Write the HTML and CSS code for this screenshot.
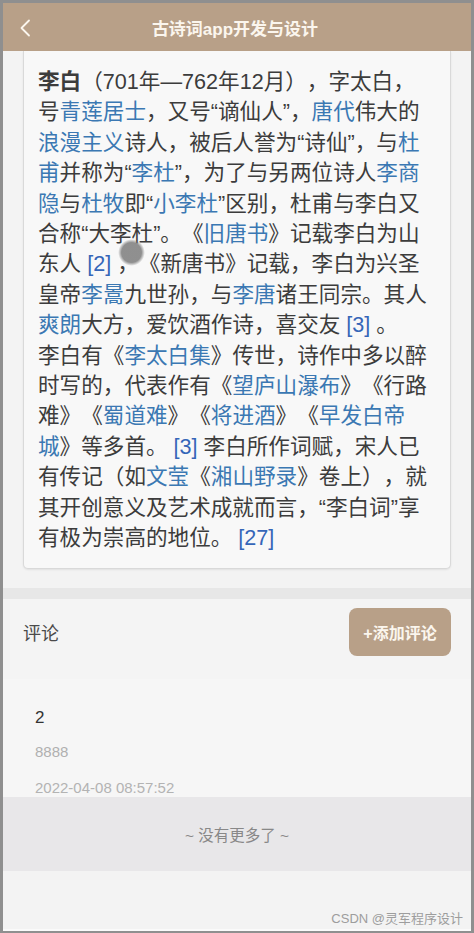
FILE: index.html
```html
<!DOCTYPE html>
<html lang="zh-CN">
<head>
    <meta charset="UTF-8">
    <meta name="viewport" content="width=device-width, initial-scale=1.0">
    <title>古诗词app开发与设计</title>
    <link rel="stylesheet" href="styles.css">
</head>
<body>
    <div class="screen">
        <!-- Top bar -->
        <header class="topbar">
            <a class="back-btn" href="#">
                <svg width="12" height="18" viewBox="0 0 12 18">
                    <polyline points="10,1.5 2.5,9 10,16.5" fill="none" stroke="#fbf6ee" stroke-width="1.8" stroke-linecap="round" stroke-linejoin="round"/>
                </svg>
            </a>
            <h1 class="topbar-title">古诗词app开发与设计</h1>
        </header>

        <!-- Poet summary -->
        <div class="intro-card">
            <p class="intro-text">
                <b>李白</b>（701年—762年12月），字太白，号<a href="#">青莲居士</a>，又号“谪仙人”，<a href="#">唐代</a>伟大的<a href="#">浪漫主义</a>诗人，被后人誉为“诗仙”，与<a href="#">杜甫</a>并称为“<a href="#">李杜</a>”，为了与另两位诗人<a href="#">李商隐</a>与<a href="#">杜牧</a>即“<a href="#">小李杜</a>”区别，杜甫与李白又合称“大李杜”。《<a href="#">旧唐书</a>》记载李白为山东人 <span class="cite">[2]</span> ，《新唐书》记载，李白为兴圣皇帝<a href="#">李暠</a>九世孙，与<a href="#">李唐</a>诸王同宗。其人<a href="#">爽朗</a>大方，爱饮酒作诗，喜交友 <span class="cite">[3]</span> 。<br>李白有《<a href="#">李太白集</a>》传世，诗作中多以醉时写的，代表作有《<a href="#">望庐山瀑布</a>》《行路难》《<a href="#">蜀道难</a>》《<a href="#">将进酒</a>》《<a href="#">早发白帝城</a>》等多首。 <span class="cite">[3]</span> 李白所作词赋，宋人已有传记（如<a href="#">文莹</a>《<a href="#">湘山野录</a>》卷上），就其开创意义及艺术成就而言，“李白词”享有极为崇高的地位。 <span class="cite">[27]</span>
            </p>
        </div>

        <!-- Comments -->
        <section class="comments">
            <div class="comments-head">
                <span class="comments-title">评论</span>
                <button class="add-comment">+添加评论</button>
            </div>
            <div class="comment-item">
                <div class="comment-user">2</div>
                <div class="comment-body">8888</div>
                <div class="comment-time">2022-04-08 08:57:52</div>
            </div>
        </section>

        <div class="no-more">~ 没有更多了 ~</div>
        <div class="page-bottom"></div>

        <div class="touch-dot"></div>
        <div class="watermark">CSDN @灵军程序设计</div>
    </div>
</body>
</html>
```

FILE: styles.css
```css
/* General */
body {
    margin: 0;
    background: #8f8f8f;
    font-family: 'Liberation Sans', 'Noto Sans CJK SC', sans-serif;
    color: #333;
    text-spacing-trim: space-all;
}

.screen {
    position: relative;
    width: 468px;
    margin: 3px 0 0 3px;
    background: #f3f3f3;
}

/* Top bar */
.topbar {
    position: relative;
    height: 48px;
    display: flex;
    align-items: center;
    justify-content: center;
    background-color: #b8a088;
}

.back-btn {
    position: absolute;
    left: 16px;
    top: 16px;
    display: flex;
}

.topbar-title {
    margin: 0 0 0 -4px;
    font-size: 17px;
    font-weight: 700;
    color: #fbf6ee;
}

/* Summary card */
.intro-card {
    margin: 0 20px 19px;
    padding: 16px 20px 14px 14px;
    background-color: #f8f8f8;
    border: 1px solid #d9d9d9;
    border-top: none;
    border-radius: 0 0 5px 5px;
    box-shadow: 0 1px 2px rgba(0, 0, 0, 0.08);
}

.intro-text {
    margin: 0;
    font-size: 21.6px;
    line-height: 30.4px;
    color: #3c3c3c;
}

.intro-text a {
    color: #3b78b3;
    text-decoration: none;
}

.intro-text .cite {
    color: #3566b8;
}

/* Comments */
.comments {
    border-top: 11px solid #e7e7e7;
}

.comments-head {
    display: flex;
    justify-content: space-between;
    align-items: center;
    padding: 9px 20px 23px;
    background-color: #f4f4f4;
}

.comments-title {
    font-size: 18px;
    color: #4a4a4a;
}

.add-comment {
    width: 102px;
    height: 48px;
    border: none;
    border-radius: 8px;
    background-color: #b8a088;
    color: #fbf6ee;
    font-family: inherit;
    font-size: 16px;
    font-weight: 700;
    cursor: pointer;
}

.comment-item {
    padding: 27px 32px 0;
    background-color: #f6f6f6;
}

.comment-user {
    font-size: 17px;
    line-height: 24px;
    color: #333;
}

.comment-body {
    margin-top: 12px;
    font-size: 15px;
    line-height: 20px;
    color: #b0b0b0;
}

.comment-time {
    margin-top: 17px;
    font-size: 15px;
    line-height: 18px;
    color: #b3b3b3;
}

.no-more {
    height: 74px;
    display: flex;
    align-items: center;
    justify-content: center;
    background-color: #e8e7e9;
    font-size: 15.5px;
    color: #888;
}

.page-bottom {
    height: 58px;
    border-bottom: 2px solid #fafafa;
}

/* Overlays */
.touch-dot {
    position: absolute;
    left: 115px;
    top: 236px;
    width: 27px;
    height: 27px;
    border-radius: 50%;
    background: radial-gradient(circle, rgba(125, 125, 125, 0.85) 52%, rgba(125, 125, 125, 0) 70%);
}

.watermark {
    position: absolute;
    right: 8px;
    bottom: 4px;
    font-size: 13px;
    color: #9d9d9d;
}
```
